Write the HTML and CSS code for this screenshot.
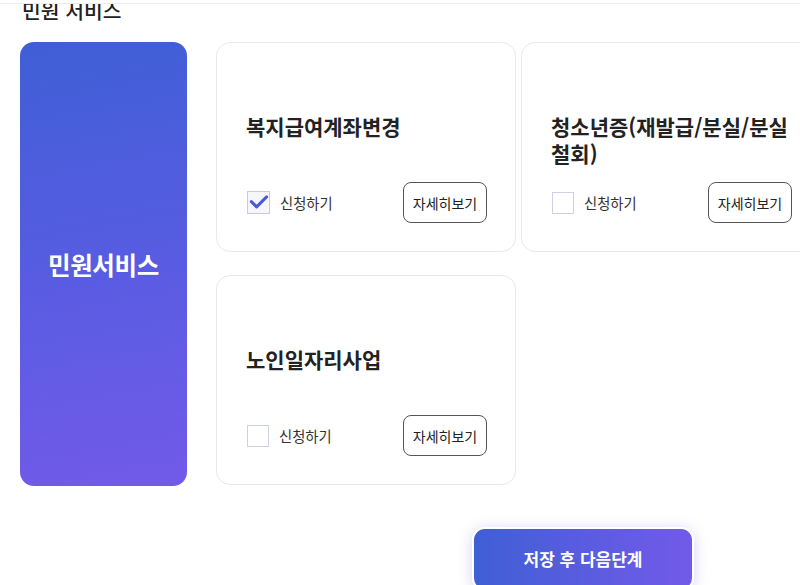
FILE: index.html
```html
<!DOCTYPE html>
<html lang="ko">
<head>
<meta charset="utf-8">
<link rel="stylesheet" href="styles.css">
</head>
<body>
<div class="topbar"></div>
<main class="page">
  <h2 class="page-title">민원 서비스</h2>
  <div class="content">
    <div class="side-panel">민원서비스</div>
    <div class="cards">
      <div class="card">
        <h3 class="card-title">복지급여계좌변경</h3>
        <div class="card-row">
          <label class="check">
            <span class="box checked">
              <svg viewBox="0 0 22 22" width="22" height="22"><path d="M3.5 9.5 L9 15 L19.5 4.5" fill="none" stroke="#4a5bd9" stroke-width="3.2" stroke-linecap="round" stroke-linejoin="round"/></svg>
            </span>
            <span class="check-label">신청하기</span>
          </label>
          <button class="detail-btn">자세히보기</button>
        </div>
      </div>
      <div class="card">
        <h3 class="card-title">청소년증(재발급/분실/분실철회)</h3>
        <div class="card-row">
          <label class="check">
            <span class="box"></span>
            <span class="check-label">신청하기</span>
          </label>
          <button class="detail-btn">자세히보기</button>
        </div>
      </div>
      <div class="card">
        <h3 class="card-title">노인일자리사업</h3>
        <div class="card-row">
          <label class="check">
            <span class="box"></span>
            <span class="check-label">신청하기</span>
          </label>
          <button class="detail-btn">자세히보기</button>
        </div>
      </div>
    </div>
  </div>
  <div class="actions">
    <button class="next-btn">저장 후 다음단계</button>
  </div>
</main>
</body>
</html>
```
FILE: styles.css
```css
html, body {
  margin: 0;
  padding: 0;
  overflow: hidden;
  background: #fff;
}
body {
  font-family: "Noto Sans CJK KR", "Noto Sans", sans-serif;
  color: #222;
  width: 800px;
  height: 585px;
}
.topbar {
  position: relative;
  z-index: 2;
  height: 3px;
  background: #fff;
  border-bottom: 1px solid #ececec;
}
.page {
  padding-left: 20px;
}
.page-title {
  margin: -7px 0 0 2px;
  font-size: 20.4px;
  font-weight: 500;
  line-height: 26px;
  color: #222;
}
.content {
  display: flex;
  gap: 29px;
  margin-top: 19px;
}
.side-panel {
  flex: 0 0 167px;
  height: 444px;
  border-radius: 14px;
  background: linear-gradient(170deg, #3f5fd5 0%, #5a5ce3 55%, #735ae9 100%);
  color: #fff;
  font-size: 24.5px;
  font-weight: 700;
  display: flex;
  align-items: center;
  justify-content: center;
  letter-spacing: -0.3px;
}
.cards {
  display: grid;
  grid-template-columns: 300px 300px;
  grid-auto-rows: 210px;
  column-gap: 5px;
  row-gap: 23px;
  flex: none;
}
.card {
  box-sizing: border-box;
  border: 1px solid #e9e9e9;
  border-radius: 14px;
  padding: 70px 28px 28px 29px;
  display: flex;
  flex-direction: column;
  background: #fff;
}
.card-title {
  margin: 0;
  font-size: 21px;
  font-weight: 700;
  line-height: 27px;
  color: #222;
  word-break: break-all;
}
.card-row {
  margin-top: auto;
  display: flex;
  align-items: center;
  justify-content: space-between;
}
.check {
  display: flex;
  align-items: center;
  gap: 10px;
  padding-left: 1px;
}
.box {
  box-sizing: border-box;
  width: 22px;
  height: 22px;
  border: 1px solid #cdd1e3;
  background: #fff;
  display: flex;
  align-items: center;
  justify-content: center;
}
.box.checked {
  width: 23px;
  height: 23px;
  border-color: #c8cbe0;
  background: #f7f7fb;
}
.box svg {
  display: block;
}
.check-label {
  font-size: 14.3px;
  color: #333;
}
.detail-btn {
  box-sizing: border-box;
  width: 84px;
  height: 41px;
  border: 1px solid #555;
  border-radius: 8px;
  background: #fff;
  font-family: inherit;
  font-size: 14px;
  color: #222;
  padding: 0;
}
.actions {
  margin-top: 41px;
  padding-left: 452px;
}
.next-btn {
  box-sizing: border-box;
  width: 222px;
  height: 64px;
  border: 2px solid #fff;
  border-radius: 13px;
  background: linear-gradient(90deg, #3f5fd5 0%, #735ae9 100%);
  box-shadow: 0 2px 14px rgba(110, 95, 230, 0.28);
  color: #fff;
  font-family: inherit;
  font-size: 17px;
  font-weight: 700;
  padding: 0 0 2px 0;
}
```
